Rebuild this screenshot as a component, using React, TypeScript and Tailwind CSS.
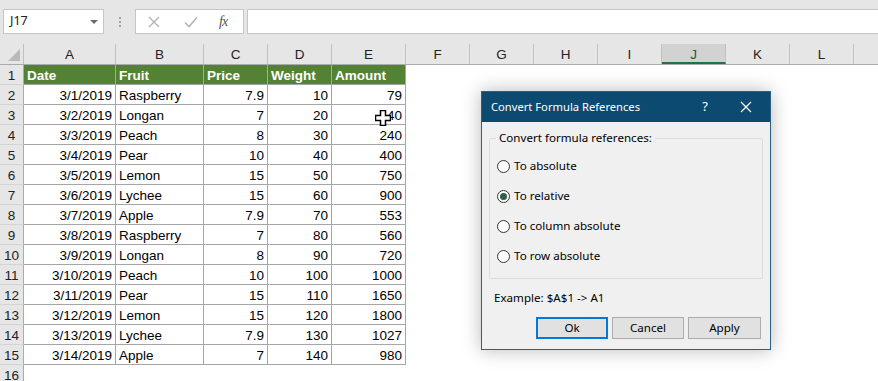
import React from "react";

const cols = [
  { l: "A", w: "w-[92px]" },
  { l: "B", w: "w-[88px]" },
  { l: "C", w: "w-[64px]" },
  { l: "D", w: "w-[64px]" },
  { l: "E", w: "w-[74px]" },
  { l: "F", w: "w-[64px]" },
  { l: "G", w: "w-[64px]" },
  { l: "H", w: "w-[64px]" },
  { l: "I", w: "w-[64px]" },
  { l: "J", w: "w-[64px]" },
  { l: "K", w: "w-[64px]" },
  { l: "L", w: "w-[64px]" },
  { l: "", w: "w-[64px]" },
];

const data = [
  ["3/1/2019", "Raspberry", "7.9", "10", "79"],
  ["3/2/2019", "Longan", "7", "20", "140"],
  ["3/3/2019", "Peach", "8", "30", "240"],
  ["3/4/2019", "Pear", "10", "40", "400"],
  ["3/5/2019", "Lemon", "15", "50", "750"],
  ["3/6/2019", "Lychee", "15", "60", "900"],
  ["3/7/2019", "Apple", "7.9", "70", "553"],
  ["3/8/2019", "Raspberry", "7", "80", "560"],
  ["3/9/2019", "Longan", "8", "90", "720"],
  ["3/10/2019", "Peach", "10", "100", "1000"],
  ["3/11/2019", "Pear", "15", "110", "1650"],
  ["3/12/2019", "Lemon", "15", "120", "1800"],
  ["3/13/2019", "Lychee", "7.9", "130", "1027"],
  ["3/14/2019", "Apple", "7", "140", "980"],
];

const heads = ["Date", "Fruit", "Price", "Weight", "Amount"];
const options = ["To absolute", "To relative", "To column absolute", "To row absolute"];

const RowHead = ({ n }: { n: number }) => (
  <div className="w-[24px] h-[20px] shrink-0 bg-[#e6e6e6] border-r border-r-[#ababab] border-b border-b-[#d4d4d4] flex items-center justify-center pt-[3px] text-[13.5px] text-[#222]">
    {n}
  </div>
);

const Radio = ({ on }: { on: boolean }) => (
  <div className="w-[13px] h-[13px] rounded-full border border-[#333] bg-white flex items-center justify-center">
    {on && <div className="w-[7px] h-[7px] rounded-full bg-[#2f5f45]" />}
  </div>
);

export default function App() {
  return (
    <div className="relative w-[878px] h-[381px] overflow-hidden bg-white text-black font-['Liberation_Sans',sans-serif]">
      {/* formula bar */}
      <div className="h-[44px] bg-[#e6e6e6] flex items-start pt-[9px]">
        <div className="ml-[3px] w-[101px] h-[25px] bg-white border border-[#c6c6c6] flex items-center justify-between pl-[6px] pr-[5px] text-[12.5px] text-[#222] font-['Noto_Sans',sans-serif]">
          <span>J17</span>
          <div className="w-0 h-0 border-l-[4px] border-r-[4px] border-t-[4px] border-l-transparent border-r-transparent border-t-[#6d6d6d]" />
        </div>
        <div className="w-[31px] h-[25px] flex flex-col items-center justify-center gap-[2px]">
          <div className="w-[2px] h-[2px] bg-[#a0a0a0]" />
          <div className="w-[2px] h-[2px] bg-[#a0a0a0]" />
          <div className="w-[2px] h-[2px] bg-[#a0a0a0]" />
        </div>
        <div className="w-[109px] h-[25px] bg-white border border-[#c6c6c6] flex items-center">
          <svg width="12" height="12" viewBox="0 0 12 12" className="ml-[12px]">
            <path d="M1 1 L11 11 M11 1 L1 11" stroke="#b4b4b4" strokeWidth="1.4" fill="none" />
          </svg>
          <svg width="14" height="12" viewBox="0 0 14 12" className="ml-[24px]">
            <path d="M1 6.5 L5 10.5 L13 1.5" stroke="#b4b4b4" strokeWidth="1.6" fill="none" />
          </svg>
          <span className="ml-[21px] text-[14px] italic text-[#555] font-['Liberation_Serif',serif] tracking-[-1px]">
            fx
          </span>
        </div>
        <div className="ml-[3px] flex-1 h-[25px] bg-white border-y border-l border-[#c6c6c6]" />
      </div>

      {/* column headers */}
      <div className="flex h-[21px] bg-[#e6e6e6] border-b border-[#ababab]">
        <div className="w-[24px] h-[20px] shrink-0 border-r border-[#c0c0c0] flex items-end justify-end pr-[3px] pb-[3px]">
          <svg width="12" height="12" viewBox="0 0 12 12">
            <path d="M12 0 L12 12 L0 12 Z" fill="#b9b9b9" />
          </svg>
        </div>
        {cols.map((c, i) =>
          c.l === "J" ? (
            <div
              key={i}
              className={`${c.w} shrink-0 h-[20px] bg-[#d2d2d2] border-r border-[#c0c0c0] border-b-2 border-b-[#217346] flex items-center justify-center pt-[4px] text-[13.5px] text-[#1e5c3a]`}
            >
              {c.l}
            </div>
          ) : (
            <div
              key={i}
              className={`${c.w} shrink-0 h-[20px] border-r border-[#c0c0c0] flex items-center justify-center pt-[3px] text-[13.5px] text-[#222]`}
            >
              {c.l}
            </div>
          )
        )}
      </div>

      {/* header row */}
      <div className="flex">
        <RowHead n={1} />
        {heads.map((h, i) => (
          <div
            key={h}
            className={`${cols[i].w} shrink-0 h-[20px] bg-[#548235] border-r border-b border-[#a6a6a6] flex items-center px-[3px] pt-[3px] text-[13.5px] font-bold text-white`}
          >
            {h}
          </div>
        ))}
      </div>

      {/* data rows */}
      {data.map((r, ri) => (
        <div key={ri} className="flex">
          <RowHead n={ri + 2} />
          {r.map((v, ci) => (
            <div
              key={ci}
              className={`${cols[ci].w} shrink-0 h-[20px] border-r border-b border-[#a6a6a6] flex items-center px-[3px] pt-[3px] text-[13.5px] ${
                ci === 1 ? "justify-start" : "justify-end"
              }`}
            >
              {v}
            </div>
          ))}
        </div>
      ))}
      <div className="flex">
        <RowHead n={16} />
      </div>

      {/* cell cursor */}
      <svg width="16" height="16" viewBox="0 0 16 16" className="absolute left-[375px] top-[110px]">
        <path
          d="M5.5 0.5 H10.5 V5.5 H15.5 V10.5 H10.5 V15.5 H5.5 V10.5 H0.5 V5.5 H5.5 Z"
          fill="white"
          stroke="black"
          strokeWidth="1.5"
        />
      </svg>

      {/* dialog */}
      <div className="absolute left-[481px] top-[91px] w-[290px] h-[259px] bg-[#f0f0f0] border border-[#2d5f80] shadow-[0_0_18px_rgba(0,0,0,0.28)] font-['Noto_Sans',sans-serif] text-[11.6px] flex flex-col">
        <div className="h-[30px] bg-[#0d4a72] flex items-center pl-[9px] text-white text-[11.2px] shrink-0">
          <span className="flex-1">Convert Formula References</span>
          <span className="w-[20px] text-center text-[13px] mr-[25px]">?</span>
          <svg width="12" height="12" viewBox="0 0 12 12" className="mr-[18px]">
            <path d="M1 1 L11 11 M11 1 L1 11" stroke="white" strokeWidth="1.2" fill="none" />
          </svg>
        </div>
        <div className="px-[7px] pt-[16px] flex flex-col">
          <div className="relative h-[141px] border border-[#dcdcdc] rounded-[2px] flex flex-col pt-[19px] pl-[7px] gap-[14px]">
            <span className="absolute -top-[10px] left-[6px] bg-[#f0f0f0] px-[3px] leading-[18px] text-black">
              Convert formula references:
            </span>
            {options.map((o, i) => (
              <div key={o} className="flex items-center gap-[4px] h-[16px]">
                <Radio on={i === 1} />
                <span>{o}</span>
              </div>
            ))}
          </div>
          <div className="mt-[11px] pl-[5px] leading-[16px]">Example: $A$1 -&gt; A1</div>
          <div className="mt-[11px] flex justify-end gap-[4px] pr-[2px]">
            <button className="w-[72px] h-[22px] bg-[#e1e1e1] border-2 border-[#0078d7] leading-[16px]">Ok</button>
            <button className="w-[72px] h-[22px] bg-[#e1e1e1] border border-[#adadad] leading-[16px]">Cancel</button>
            <button className="w-[73px] h-[22px] bg-[#e1e1e1] border border-[#adadad] leading-[16px]">Apply</button>
          </div>
        </div>
      </div>
    </div>
  );
}
